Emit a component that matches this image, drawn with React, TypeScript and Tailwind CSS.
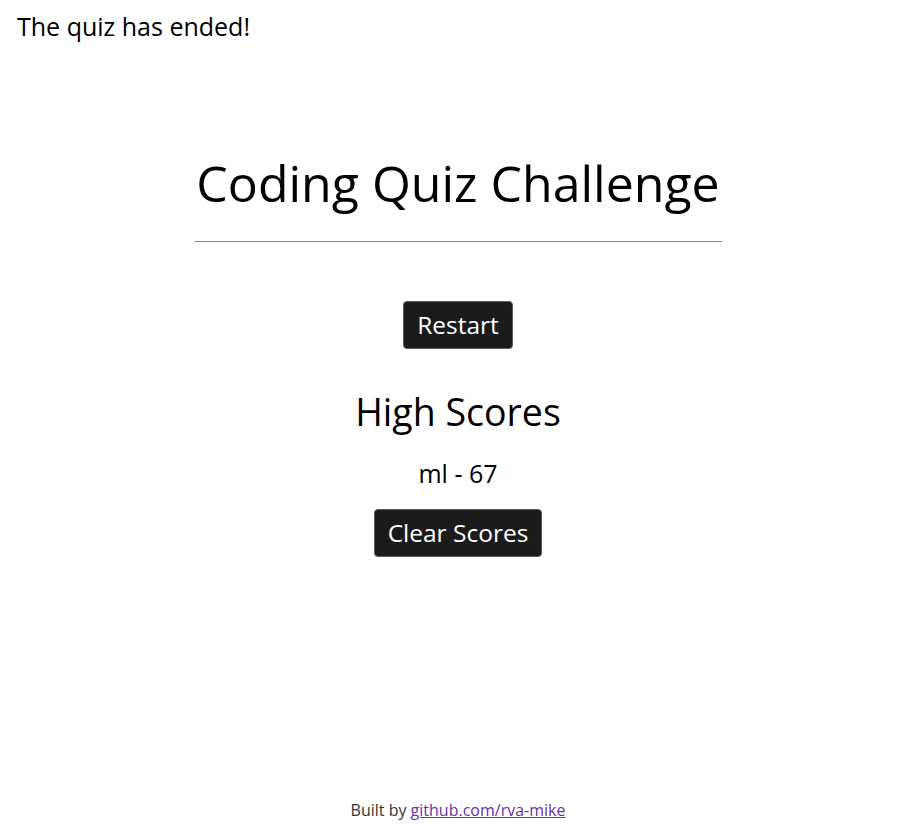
export default function App() {
  const scores = [{ initials: 'ml', score: 67 }];

  return (
    <div
      className="min-h-[830px] flex flex-col bg-white text-black"
      style={{ fontFamily: '"Open Sans", "Noto Sans", sans-serif' }}
    >
      {/* Status line */}
      <p className="pl-[17px] pt-[9px] text-[25px] leading-[34px]">The quiz has ended!</p>

      {/* Main */}
      <main className="flex flex-col items-center pl-[12px]">
        <h1 className="mt-[105px] text-[50px] leading-[70px]">Coding Quiz Challenge</h1>
        <hr className="mt-[23px] w-[527px] border-0 border-t border-[#808080]" />

        <button className="mt-[59px] px-[13px] h-[48px] bg-[#1b1b1b] text-white text-[24.5px] rounded-[4px] border border-[#5a5a5a]">
          Restart
        </button>

        <h2 className="mt-[38px] text-[37.5px] leading-[50px]">High Scores</h2>
        <ul className="mt-[19px] flex flex-col items-center">
          {scores.map((s) => (
            <li key={s.initials} className="text-[25px] leading-[34px]">
              {s.initials} - {s.score}
            </li>
          ))}
        </ul>

        <button className="mt-[19px] px-[13px] h-[48px] bg-[#1b1b1b] text-white text-[24.5px] rounded-[4px] border border-[#5a5a5a]">
          Clear Scores
        </button>
      </main>

      {/* Footer */}
      <footer className="mt-auto pb-[8px] pl-[12px] text-center text-[16px] leading-[24px] text-[#333]">
        Built by{' '}
        <a href="#" className="text-[#6b2fa8] underline">
          github.com/rva-mike
        </a>
      </footer>
    </div>
  );
}
